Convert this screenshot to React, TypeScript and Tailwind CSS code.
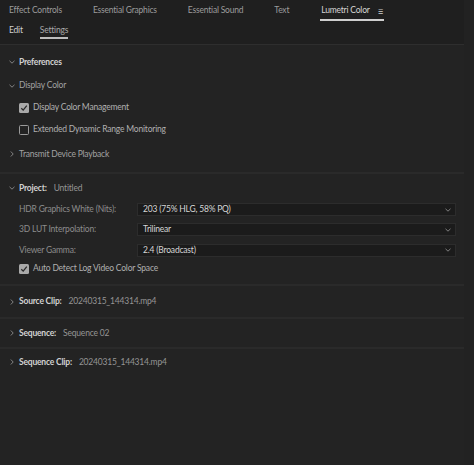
import React from 'react'

const font = { fontFamily: 'Lato, "Liberation Sans", sans-serif' }

function Chevron({ open }: { open: boolean }) {
  return (
    <svg width="6" height="6" viewBox="0 0 6 6" className="shrink-0">
      {open ? (
        <polyline points="0.5,1.8 3,4.2 5.5,1.8" fill="none" stroke="#8c8c8c" strokeWidth="0.9" />
      ) : (
        <polyline points="1.8,0.5 4.2,3 1.8,5.5" fill="none" stroke="#8c8c8c" strokeWidth="0.9" />
      )}
    </svg>
  )
}

function Checkbox({ checked, label }: { checked: boolean; label: string }) {
  return (
    <div className="flex items-center pl-[19px]">
      {checked ? (
        <div className="w-[10px] h-[10px] rounded-[1.5px] bg-[#a9a9a9] flex items-center justify-center">
          <svg width="8" height="8" viewBox="0 0 8 8">
            <polyline points="1.3,4.2 3.2,6.1 6.8,1.6" fill="none" stroke="#2a2a2a" strokeWidth="1.3" />
          </svg>
        </div>
      ) : (
        <div className="w-[10px] h-[10px] rounded-[1.5px] border border-[#9a9a9a]" />
      )}
      <span className="ml-[4px] text-[8.5px] text-[#b0b0b0]">{label}</span>
    </div>
  )
}

function Collapse({ title, value, open }: { title: string; value?: string; open: boolean }) {
  return (
    <div className="flex items-center pl-[9px] gap-[4px]">
      <Chevron open={open} />
      <span className="text-[8.5px] font-bold text-[#d2d2d2]">{title}</span>
      {value && <span className="ml-[3px] text-[8.5px] text-[#959595]">{value}</span>}
    </div>
  )
}

function Select({ label, value }: { label: string; value: string }) {
  return (
    <div className="flex items-center pl-[19px] h-full">
      <span className="w-[118px] text-[8.5px] text-[#8c8c8c]">{label}</span>
      <div className="w-[319px] h-[13px] bg-[#1b1b1b] border border-[#2c2c2c] flex items-center justify-between pl-[5px] pr-[4px]">
        <span className="text-[8.5px] text-[#d6d6d6]">{value}</span>
        <svg width="6" height="4" viewBox="0 0 6 4">
          <polyline points="0.5,0.8 3,3.2 5.5,0.8" fill="none" stroke="#8c8c8c" strokeWidth="0.9" />
        </svg>
      </div>
    </div>
  )
}

function Divider() {
  return <div className="h-[2px] bg-[#2a2a2a]" />
}

export default function App() {
  const tabs = ['Effect Controls', 'Essential Graphics', 'Essential Sound', 'Text']

  return (
    <div className="w-[474px] h-[465px] bg-[#232323] flex overflow-hidden leading-none tracking-[-0.2px]" style={font}>
      <div className="w-[464px] flex flex-col">
        {/* Header */}
        <div className="bg-[#1f1f1f] h-[44px] flex flex-col">
          <div className="h-[21px] flex items-center pl-[9px] gap-[31px]">
            {tabs.map((t) => (
              <span key={t} className="text-[8.5px] text-[#9c9c9c]">{t}</span>
            ))}
            <div className="h-full flex items-center gap-[8px] border-b-2 border-[#cfcfcf] px-[1px] pt-[2px]">
              <span className="text-[8.5px] text-[#d6d6d6]">Lumetri Color</span>
              <span className="text-[10px] text-[#cfcfcf]">≡</span>
            </div>
          </div>
          <div className="h-[18px] flex items-center pl-[9px] gap-[17px] pt-[1px]">
            <span className="text-[8.5px] text-[#cfcfcf]">Edit</span>
            <span className="text-[8.5px] text-[#a8a8a8] h-full flex items-center border-b-2 border-[#bdbdbd] pt-[2px]">Settings</span>
          </div>
        </div>
        <div className="h-[1px] bg-[#2e2e2e]" />

        {/* Preferences */}
        <div className="pt-[5px] pb-[5px] flex flex-col">
          <div className="h-[24px] flex items-center"><Collapse title="Preferences" open /></div>
          <div className="h-[23px] flex items-center pl-[9px] gap-[4px]">
            <Chevron open />
            <span className="text-[8.5px] text-[#a2a2a2]">Display Color</span>
          </div>
          <div className="h-[21px] flex items-center"><Checkbox checked label="Display Color Management" /></div>
          <div className="h-[23px] flex items-center"><Checkbox checked={false} label="Extended Dynamic Range Monitoring" /></div>
          <div className="h-[26px] flex items-center pl-[9px] gap-[4px]">
            <Chevron open={false} />
            <span className="text-[8.5px] text-[#a2a2a2]">Transmit Device Playback</span>
          </div>
        </div>
        <Divider />

        {/* Project */}
        <div className="pt-[2px] pb-[7px] flex flex-col">
          <div className="h-[24px] flex items-center"><Collapse title="Project:" value="Untitled" open /></div>
          <div className="h-[19px]"><Select label="HDR Graphics White (Nits):" value="203 (75% HLG, 58% PQ)" /></div>
          <div className="h-[21px]"><Select label="3D LUT Interpolation:" value="Trilinear" /></div>
          <div className="h-[20px]"><Select label="Viewer Gamma:" value="2.4 (Broadcast)" /></div>
          <div className="h-[17px] flex items-center"><Checkbox checked label="Auto Detect Log Video Color Space" /></div>
        </div>
        <Divider />

        <div className="h-[31px] flex items-center"><Collapse title="Source Clip:" value="20240315_144314.mp4" open={false} /></div>
        <Divider />
        <div className="h-[28px] flex items-center"><Collapse title="Sequence:" value="Sequence 02" open={false} /></div>
        <Divider />
        <div className="h-[26px] flex items-center"><Collapse title="Sequence Clip:" value="20240315_144314.mp4" open={false} /></div>
      </div>
      <div className="w-[10px] bg-[#222222]" />
    </div>
  )
}
